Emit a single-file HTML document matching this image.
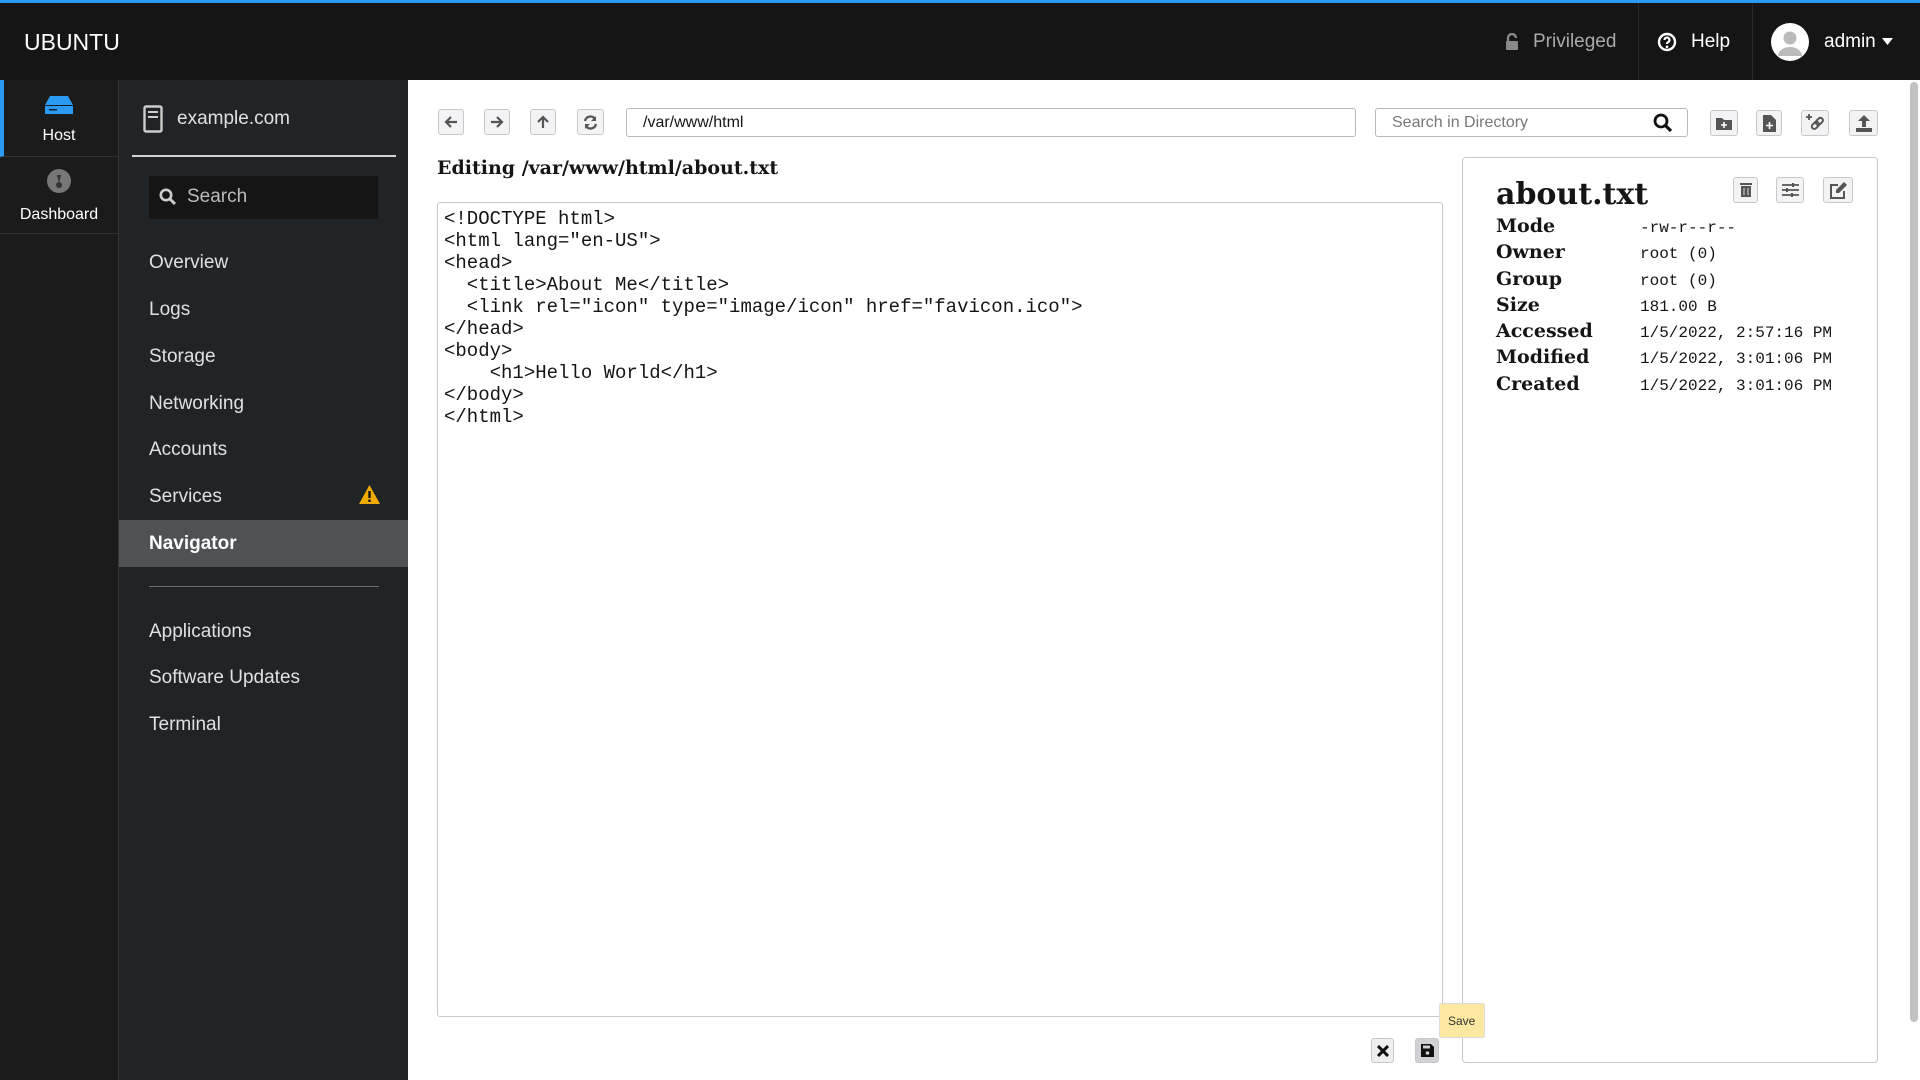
<!DOCTYPE html>
<html><head><meta charset="utf-8"><style>
*{box-sizing:border-box;margin:0;padding:0}
body{width:1920px;height:1080px;overflow:hidden;background:#fff;font-family:"Liberation Sans",sans-serif;position:relative}
.hdr{position:absolute;left:0;top:0;width:1920px;height:80px;background:#151515;border-top:3px solid #2b9af3}
.brand{position:absolute;left:24px;top:26px;color:#fff;font-size:23px}
.hi{position:absolute;top:0;height:77px;display:flex;align-items:center;color:#fff;font-size:19px}
.rail{position:absolute;left:0;top:80px;width:119px;height:1000px;background:#1b1b1b;border-right:1px solid #333}
.ri{height:77px;border-bottom:1px solid #333;color:#fff;font-size:16px;text-align:center;padding-top:16px}
.nav{position:absolute;left:119px;top:80px;width:289px;height:1000px;background:#212427}
.ni{position:absolute;left:30px;color:#e0e0e0;font-size:19px}
.btn{position:absolute;width:26px;height:26px;border:1px solid #c8c8c8;border-radius:3px;background:#f3f3f5}
.btn svg{position:absolute}
.inp{position:absolute;height:29px;border:1px solid #b8b8b8;border-radius:3px;font-size:16px;color:#151515;padding:5px 16px}
.code{position:absolute;left:437px;top:202px;width:1006px;height:815px;border:1px solid #c8c8c8;border-radius:3px;font-family:"Liberation Mono",monospace;font-size:19px;line-height:22px;padding:5px 6px;white-space:pre;color:#151515}
.info{position:absolute;left:1462px;top:157px;width:416px;height:906px;border:1px solid #c8c8c8;border-radius:4px}
.lab{position:absolute;left:33px;font-family:"DejaVu Serif",serif;font-weight:bold;font-size:19px;color:#151515}
.val{position:absolute;left:177px;font-family:"Liberation Mono",monospace;font-size:16px;color:#151515}
</style></head><body>
<div class="hdr"><div class="brand">UBUNTU</div>
<div class="hi" style="left:1505px;color:#aaa"><svg width="14" height="18" viewBox="0 0 14 18"><path d="M3 8V5a4 4 0 0 1 8 0" stroke="#888" stroke-width="2.4" fill="none"/><rect x="1" y="8" width="12" height="9" rx="1" fill="#888"/></svg><span style="margin-left:14px">Privileged</span></div>
<div style="position:absolute;left:1638px;top:0;width:1px;height:77px;background:#2a2a2a"></div>
<div class="hi" style="left:1657px"><svg width="20" height="20" viewBox="0 0 20 20"><circle cx="10" cy="10" r="8" stroke="#fff" stroke-width="2.4" fill="none"/><path d="M7.5 8a2.5 2.5 0 1 1 3.5 2.3c-.8.4-1 .9-1 1.7" stroke="#fff" stroke-width="2.2" fill="none"/><circle cx="10" cy="14.8" r="1.3" fill="#fff"/></svg><span style="margin-left:14px">Help</span></div>
<div style="position:absolute;left:1752px;top:0;width:1px;height:77px;background:#2a2a2a"></div>
<div class="hi" style="left:1771px"><svg width="38" height="38" viewBox="0 0 38 38"><circle cx="19" cy="19" r="19" fill="#fff"/><circle cx="19" cy="15" r="6.5" fill="#bbb"/><path d="M7 33a12 9 0 0 1 24 0z" fill="#bbb"/></svg><span style="margin-left:15px">admin</span><svg style="margin-left:6px" width="11" height="7" viewBox="0 0 11 7"><path d="M0 0h11L5.5 7z" fill="#fff"/></svg></div>
</div>
<div class="rail">
<div class="ri" style="border-left:4px solid #2b9af3;padding-right:4px"><svg width="28" height="18" viewBox="0 0 28 18"><path d="M5 0h18l5 9H0z" fill="#2b9af3"/><rect y="10" width="28" height="8" fill="#2b9af3"/><rect x="4" y="13" width="8" height="1.5" fill="#123"/></svg><div style="margin-top:8px">Host</div></div>
<div class="ri" style="padding-top:12px"><svg width="26" height="24" viewBox="0 0 26 24"><circle cx="13" cy="12" r="12" fill="#777"/><path d="M13 14l-2-8h4z" fill="#333"/><circle cx="13" cy="16" r="3" fill="#333"/></svg><div style="margin-top:8px">Dashboard</div></div>
</div>
<div class="nav">
<svg style="position:absolute;left:24px;top:25px" width="20" height="28" viewBox="0 0 20 28"><rect x="1.5" y="1.5" width="17" height="25" rx="1.5" stroke="#ccc" stroke-width="2.4" fill="none"/><rect x="5" y="6" width="10" height="2" fill="#ccc"/><rect x="5" y="11" width="10" height="2" fill="#ccc"/></svg>
<div style="position:absolute;left:58px;top:28px;color:#e0e0e0;font-size:19px">example.com</div>
<div style="position:absolute;left:13px;top:75px;width:264px;height:2px;background:#d2d2d2"></div>
<div style="position:absolute;left:30px;top:96px;width:229px;height:43px;background:#151515;color:#bbb;font-size:19px;padding:10px 0 0 38px"><svg style="position:absolute;left:10px;top:12px" width="18" height="18" viewBox="0 0 18 18"><circle cx="7" cy="7" r="5.2" stroke="#ccc" stroke-width="2.6" fill="none"/><path d="M11 11l5 5" stroke="#ccc" stroke-width="3"/></svg>Search</div>
<div class="ni" style="top:172px">Overview</div>
<div class="ni" style="top:219px">Logs</div>
<div class="ni" style="top:266px">Storage</div>
<div class="ni" style="top:313px">Networking</div>
<div class="ni" style="top:359px">Accounts</div>
<div class="ni" style="top:406px">Services</div>
<svg style="position:absolute;left:240px;top:405px" width="21" height="19" viewBox="0 0 21 19"><path d="M10.5 0L21 19H0z" fill="#f0ab00"/><rect x="9.3" y="6" width="2.4" height="7" fill="#151515"/><rect x="9.3" y="14.5" width="2.4" height="2.4" fill="#151515"/></svg>
<div style="position:absolute;left:0;top:440px;width:289px;height:47px;background:#4f5255"></div>
<div class="ni" style="top:453px;color:#fff;font-weight:bold">Navigator</div>
<div style="position:absolute;left:30px;top:506px;width:230px;height:1px;background:#6a6e73"></div>
<div class="ni" style="top:541px">Applications</div>
<div class="ni" style="top:587px">Software Updates</div>
<div class="ni" style="top:634px">Terminal</div>
</div>
<div class="btn" style="left:438px;top:109px"><svg style="left:5px;top:5px" width="14" height="14" viewBox="0 0 14 14"><path d="M13 7H2M7 2L2 7l5 5" stroke="#555" stroke-width="2.2" fill="none"/></svg></div>
<div class="btn" style="left:484px;top:109px"><svg style="left:5px;top:5px" width="14" height="14" viewBox="0 0 14 14"><path d="M1 7h11M7 2l5 5-5 5" stroke="#555" stroke-width="2.2" fill="none"/></svg></div>
<div class="btn" style="left:530px;top:109px"><svg style="left:5px;top:5px" width="14" height="14" viewBox="0 0 14 14"><path d="M7 13V2M2 7l5-5 5 5" stroke="#555" stroke-width="2.2" fill="none"/></svg></div>
<div class="btn" style="left:577px;top:109px;width:27px"><svg style="left:5px;top:5px" width="15" height="15" viewBox="0 0 15 15"><path d="M2 6a5.5 5.5 0 0 1 10-2M13 9a5.5 5.5 0 0 1-10 2" stroke="#555" stroke-width="2.2" fill="none"/><path d="M13 1v5H8zM2 14V9h5z" fill="#555"/></svg></div>
<div class="inp" style="left:626px;top:108px;width:730px">/var/www/html</div>
<div class="inp" style="left:1375px;top:108px;width:313px;color:#777;padding-left:16px">Search in Directory<svg style="position:absolute;right:14px;top:4px" width="20" height="20" viewBox="0 0 20 20"><circle cx="8" cy="8" r="6" stroke="#111" stroke-width="2.8" fill="none"/><path d="M12.5 12.5l5.5 5.5" stroke="#111" stroke-width="3.2"/></svg></div>
<div class="btn" style="left:1710px;top:110px;width:28px"><svg style="left:5px;top:6px" width="16" height="13" viewBox="0 0 16 13"><path d="M0 1h6l2 2h8v10H0z" fill="#555"/><path d="M8 5v6M5 8h6" stroke="#fff" stroke-width="1.6"/></svg></div>
<div class="btn" style="left:1756px;top:110px"><svg style="left:6px;top:4px" width="13" height="17" viewBox="0 0 13 17"><path d="M0 0h8l5 5v12H0z" fill="#555"/><path d="M6.5 7v7M3 10.5h7" stroke="#fff" stroke-width="1.6"/></svg></div>
<div class="btn" style="left:1801px;top:110px;width:28px"><svg style="left:2px;top:2px" width="22" height="20" viewBox="0 0 22 20"><path d="M2 4h6M5 1v6" stroke="#555" stroke-width="1.8"/><rect x="7" y="10" width="8" height="5" rx="2.5" transform="rotate(-45 11 12)" stroke="#555" stroke-width="2" fill="none"/><rect x="11" y="6" width="8" height="5" rx="2.5" transform="rotate(-45 15 8)" stroke="#555" stroke-width="2" fill="none"/></svg></div>
<div class="btn" style="left:1849px;top:110px;width:29px"><svg style="left:6px;top:4px" width="16" height="17" viewBox="0 0 16 17"><path d="M8 0l6 6h-4v6H6V6H2z" fill="#555"/><rect y="13" width="16" height="4" fill="#555"/></svg></div>
<div style="position:absolute;left:437px;top:157px;font-family:'DejaVu Serif',serif;font-weight:bold;font-size:19px;color:#151515">Editing /var/www/html/about.txt</div>
<div class="code">&lt;!DOCTYPE html&gt;
&lt;html lang="en-US"&gt;
&lt;head&gt;
  &lt;title&gt;About Me&lt;/title&gt;
  &lt;link rel="icon" type="image/icon" href="favicon.ico"&gt;
&lt;/head&gt;
&lt;body&gt;
    &lt;h1&gt;Hello World&lt;/h1&gt;
&lt;/body&gt;
&lt;/html&gt;</div>
<div class="info">
<div style="position:absolute;left:33px;top:19px;font-family:'DejaVu Serif',serif;font-weight:bold;font-size:30px;color:#151515">about.txt</div>
<div class="btn" style="left:270px;top:19px;width:25px"><svg style="left:6px;top:4px" width="12" height="15" viewBox="0 0 12 15"><rect y="1" width="12" height="2" fill="#555"/><rect x="1" y="4" width="10" height="11" fill="#555"/><path d="M4 6v7M8 6v7" stroke="#ddd" stroke-width="1"/></svg></div>
<div class="btn" style="left:313px;top:19px;width:28px"><svg style="left:5px;top:5px" width="17" height="14" viewBox="0 0 17 14"><path d="M0 2h17M0 7h17M0 12h17" stroke="#555" stroke-width="1.8"/><rect x="10" y="0" width="2" height="4" fill="#555"/><rect x="4" y="5" width="2" height="4" fill="#555"/><rect x="9" y="10" width="2" height="4" fill="#555"/></svg></div>
<div class="btn" style="left:360px;top:19px;width:30px"><svg style="left:6px;top:4px" width="17" height="17" viewBox="0 0 17 17"><path d="M8 3H1v13h13V9" stroke="#555" stroke-width="2" fill="none"/><path d="M14 0l3 3-8 8H6V8z" fill="#555"/></svg></div>
<div class="lab" style="top:57px">Mode</div><div class="val" style="top:61px">-rw-r--r--</div>
<div class="lab" style="top:83px">Owner</div><div class="val" style="top:87px">root (0)</div>
<div class="lab" style="top:110px">Group</div><div class="val" style="top:114px">root (0)</div>
<div class="lab" style="top:136px">Size</div><div class="val" style="top:140px">181.00 B</div>
<div class="lab" style="top:162px">Accessed</div><div class="val" style="top:166px">1/5/2022, 2:57:16 PM</div>
<div class="lab" style="top:188px">Modified</div><div class="val" style="top:192px">1/5/2022, 3:01:06 PM</div>
<div class="lab" style="top:215px">Created</div><div class="val" style="top:219px">1/5/2022, 3:01:06 PM</div>
</div>
<div class="btn" style="left:1371px;top:1038px;width:23px;height:25px;background:#eee"><svg style="left:5px;top:6px" width="12" height="12" viewBox="0 0 12 12"><path d="M1 1l10 10M11 1L1 11" stroke="#111" stroke-width="3"/></svg></div>
<div class="btn" style="left:1415px;top:1038px;width:24px;height:25px;background:#d0d0d5"><svg style="left:5px;top:5px" width="13" height="13" viewBox="0 0 13 13"><path d="M0 0h10l3 3v10H0z" fill="#111"/><rect x="2" y="1.5" width="7" height="3" fill="#d0d0d5"/><circle cx="6.5" cy="9" r="1.8" fill="#d0d0d5"/></svg></div>
<div style="position:absolute;left:1439px;top:1003px;width:46px;height:35px;background:#fce8a0;border:1px solid #ddd;border-radius:2px;font-size:12px;color:#333;padding:10px 0 0 8px">Save</div>
<div style="position:absolute;left:1910px;top:82px;width:8px;height:940px;background:#c1c1c1;border-radius:4px"></div>
</body></html>
